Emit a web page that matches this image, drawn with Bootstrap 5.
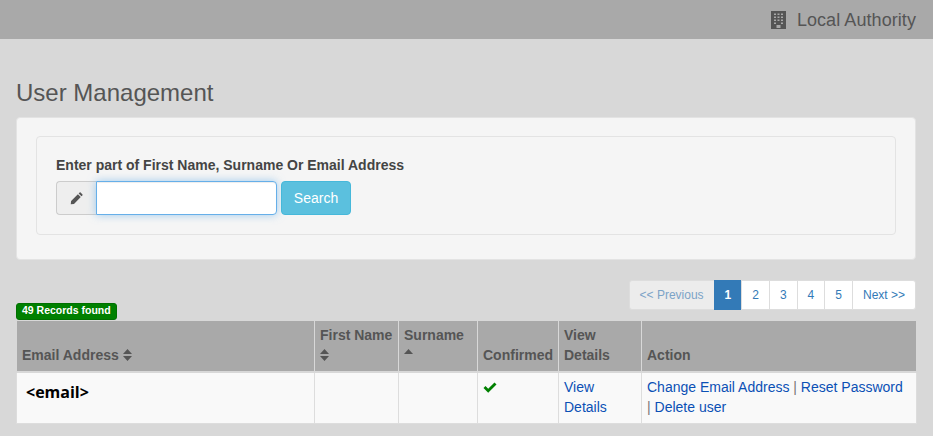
<!DOCTYPE html>
<html lang="en">
<head>
<meta charset="utf-8">
<title>User Management</title>
<link href="https://cdn.jsdelivr.net/npm/bootstrap@5.3.0/dist/css/bootstrap.min.css" rel="stylesheet">
<style>
body { background: #d8d8d8; font-family: "Liberation Sans", Arial, sans-serif; font-size: 14px; line-height: 20px; color: #555; overflow: hidden; }
.topbar { height: 39px; background: #a9a9a9; padding-right: 17px; font-size: 18px; letter-spacing: .07px; color: #555; }
.topbar svg { width: 15px; height: 18px; margin-right: 11px; }
.pagewrap { padding: 0 17px 0 16px; }
.pagetitle { font-size: 24px; line-height: 26px; font-weight: 400; color: #555; margin: 41px 0 11px; }
.outerwell { background: #f5f5f5; border: 1px solid #e3e3e3; border-radius: 4px; padding: 18px 19px; height: 143px; }
.innerwell { background: #f5f5f5; border: 1px solid #e3e3e3; border-radius: 4px; padding: 18px 19px; height: 99px; }
.fieldlabel { font-weight: 700; font-size: 14px; line-height: 20px; color: #444; margin-bottom: 6px; }
.addonbox { width: 40px; height: 34px; background: #eee; border: 1px solid #ccc; border-right: 0; border-radius: 4px 0 0 4px; }
.addonbox svg { width: 13px; height: 13px; }
.termbox { width: 181px; height: 34px; padding: 6px 12px; background: #fff; border: 1px solid #66afe9; border-radius: 0 4px 4px 0; box-shadow: inset 0 1px 1px rgba(0,0,0,.075), 0 0 8px rgba(102,175,233,.6); outline: 0; font-size: 14px; }
.searchbtn { width: 70px; height: 34px; margin-left: 4px; padding: 0; background: #5bc0de; border: 1px solid #46b8da; border-radius: 4px; color: #fff; font-size: 14px; }
.pagerrow { margin-top: 20px; height: 40px; }
.pagerlist { margin: 0; padding: 0; list-style: none; height: 30px; }
.pagerlist a, .pagerlist span { display: block; height: 30px; padding: 5px 10px; line-height: 18px; font-size: 12px; text-decoration: none; background: #fff; border: 1px solid #ddd; margin-left: -1px; color: #337ab7; }
.pagerlist li:first-child span { margin-left: 0; background: #ececec; color: #7ba3c7; border-radius: 3px 0 0 3px; width: 86px; white-space: nowrap; }
.pagerlist li:last-child a { border-radius: 0 3px 3px 0; }
.pagerlist .curpage { background: #337ab7; border-color: #337ab7; color: #fff; font-weight: 700; }
.recbadge { display: inline-block; position: absolute; left: 16px; top: 303px; height: 17px; padding: 0 5px; background: #008000; border: 1px solid #007000; border-radius: 3px; color: #fff; font-size: 10.5px; font-weight: 700; line-height: 13px; white-space: nowrap; }
.usertable { width: 900px; table-layout: fixed; border-collapse: collapse; margin: 0; }
.usertable th { background: #a9a9a9; color: #555; font-weight: 700; font-size: 14px; line-height: 20px; padding: 4px 4px 6px 5px; vertical-align: bottom; border: 1px solid #d8d8d8; border-bottom-width: 2px; }
.usertable td { background: #f9f9f9; color: #777; padding: 4px 8px 5px 5px; vertical-align: top; border: 1px solid #ddd; border-top: 0; line-height: 20px; height: 51px; }
.usertable a { color: #0b50b5; text-decoration: none; }
.usertable .emailcell { font-family: "Open Sans", sans-serif; font-weight: 700; color: #000; font-size: 16px; padding: 9px 9px 0; }
.sortmark { display: inline-block; width: 9px; height: 12px; vertical-align: -1px; }
.tickmark { width: 14px; height: 12px; display: block; margin-top: 5px; }
</style>
</head>
<body>
<div class="topbar d-flex align-items-center justify-content-end">
  <svg viewBox="0 0 15 18" aria-hidden="true"><path fill="#555" fill-rule="evenodd" d="M0 0h15v18H0zM3 2.500v1.500h2V2.500zm3.500 0v1.500h2V2.500zm3.500 0v1.500h2V2.500zM3 5.500V7h2V5.500zm3.500 0V7h2V5.500zm3.500 0V7h2V5.500zM3 8.500V10h2V8.500zm3.500 0V10h2V8.500zm3.500 0V10h2V8.500zM3 11.500V13h2v-1.500zm7 0V13h2v-1.500zM5.500 14V17h4v-3z"/></svg>
  <span>Local Authority</span>
</div>
<div class="pagewrap">
  <h1 class="pagetitle">User Management</h1>
  <div class="outerwell">
    <div class="innerwell">
      <div class="fieldlabel">Enter part of First Name, Surname Or Email Address</div>
      <form class="d-flex">
        <span class="addonbox d-flex align-items-center justify-content-center">
          <svg viewBox="0 0 14 14" aria-hidden="true"><path fill="#555" d="M1.200 9.700 8.500 2.400l3.100 3.100-7.300 7.300L0.800 13.300zM9.300 1.600l.9-.9c.4-.4 1-.4 1.400 0l1.700 1.700c.4.4.4 1 0 1.400l-.9.9z"/></svg>
        </span>
        <input class="termbox" type="text" aria-label="Search term">
        <button class="searchbtn" type="button">Search</button>
      </form>
    </div>
  </div>
  <div class="pagerrow d-flex justify-content-end">
    <ul class="pagerlist d-flex">
      <li><span>&lt;&lt; Previous</span></li>
      <li><a class="curpage" href="#">1</a></li>
      <li><a href="#">2</a></li>
      <li><a href="#">3</a></li>
      <li><a href="#">4</a></li>
      <li><a href="#">5</a></li>
      <li><a href="#">Next &gt;&gt;</a></li>
    </ul>
  </div>
  <span class="recbadge">49 Records found</span>
  <table class="usertable">
    <colgroup><col style="width:298px"><col style="width:84px"><col style="width:79px"><col style="width:81px"><col style="width:83px"><col style="width:275px"></colgroup>
    <thead>
      <tr>
        <th>Email Address <svg class="sortmark" viewBox="0 0 9 12"><path fill="#555" d="M4.500 0 9 5H0zM0 7h9l-4.500 5z"/></svg></th>
        <th><span class="text-nowrap">First Name</span><br><svg class="sortmark" viewBox="0 0 9 12"><path fill="#555" d="M4.500 0 9 5H0zM0 7h9l-4.500 5z"/></svg></th>
        <th>Surname <svg class="sortmark" viewBox="0 0 9 12"><path fill="#555" d="M4.500 0 9 5H0z"/></svg></th>
        <th>Confirmed</th>
        <th>View Details</th>
        <th>Action</th>
      </tr>
    </thead>
    <tbody>
      <tr>
        <td class="emailcell">&lt;email&gt;</td>
        <td></td>
        <td></td>
        <td><svg class="tickmark" viewBox="0 0 14 12" aria-hidden="true"><path fill="#008000" d="M0.500 6 2.500 4 5.200 6.700 11.500 .5 13.500 2.500 5.200 10.800z"/></svg></td>
        <td><a href="#">View Details</a></td>
        <td><a href="#">Change Email Address</a> | <a href="#">Reset Password</a> | <a href="#">Delete user</a></td>
      </tr>
    </tbody>
  </table>
</div>
<script src="https://cdn.jsdelivr.net/npm/bootstrap@5.3.0/dist/js/bootstrap.bundle.min.js"></script>
</body>
</html>
